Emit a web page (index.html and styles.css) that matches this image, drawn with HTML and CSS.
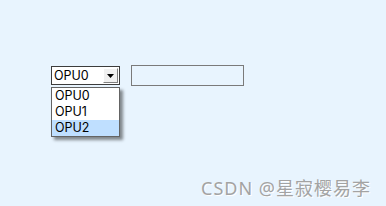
FILE: index.html
```html
<!DOCTYPE html>
<html>
<head>
  <meta name="viewport" content="width=device-width, initial-scale=1">
  <link rel="stylesheet" href="styles.css">
</head>
<body>
  <div class="page">
    <div class="row">
      <div class="select">
        <span class="select-value">OPU0</span>
        <span class="select-btn">
          <svg width="7" height="4" viewBox="0 0 7 4"><path d="M0 0h7L3.5 4z" fill="#000"/></svg>
        </span>
        <ul class="options">
          <li>OPU0</li>
          <li>OPU1</li>
          <li class="active">OPU2</li>
        </ul>
      </div>
      <input class="field" type="text">
    </div>
    <div class="mark">CSDN @星寂樱易李</div>
  </div>
</body>
</html>
```

FILE: styles.css
```css
body {
  margin: 0;
  background: #e8f4fe;
  font-family: Inter, "Noto Sans", sans-serif;
}
.page {
  height: 206px;
  box-sizing: border-box;
  padding: 65px 0 0 51px;
  display: flex;
  flex-direction: column;
}
.row {
  display: flex;
  align-items: flex-start;
  gap: 11px;
}
.select {
  position: relative;
  width: 69px;
  height: 19px;
  margin-top: 1px;
  box-sizing: border-box;
  border: 1px solid #3c3c3c;
  background: #fff;
  display: flex;
  align-items: center;
}
.select-value {
  flex: 1;
  font-size: 12.5px;
  line-height: 17px;
  padding-left: 2px;
}
.select-btn {
  width: 15px;
  height: 15px;
  margin-right: 1px;
  box-sizing: border-box;
  border: 1px solid;
  border-color: #fff #808080 #808080 #fff;
  background: #f0f0f0;
  display: flex;
  align-items: center;
  justify-content: center;
}
.options {
  position: absolute;
  top: 20px;
  left: -1px;
  width: 69px;
  margin: 0;
  padding: 0;
  list-style: none;
  box-sizing: border-box;
  border: 1px solid #646464;
  background: #fff;
  box-shadow: 3px 3px 3px rgba(0, 0, 0, 0.45);
}
.options li {
  height: 16px;
  line-height: 16px;
  padding-left: 3px;
  font-size: 12.5px;
}
.options .active {
  background: #bfdfff;
}
.field {
  width: 113px;
  height: 21px;
  margin: 0;
  padding: 0;
  box-sizing: border-box;
  border: 1px solid #7a7a7a;
  background: transparent;
}
.mark {
  margin-top: auto;
  align-self: flex-end;
  margin-right: 15px;
  margin-bottom: 8px;
  font-family: "Noto Sans", "Noto Sans CJK SC", sans-serif;
  font-size: 18px;
  line-height: 20px;
  letter-spacing: 1px;
  color: #a3a3a3;
  text-shadow: 1px 1px 0 #fff;
}
```
